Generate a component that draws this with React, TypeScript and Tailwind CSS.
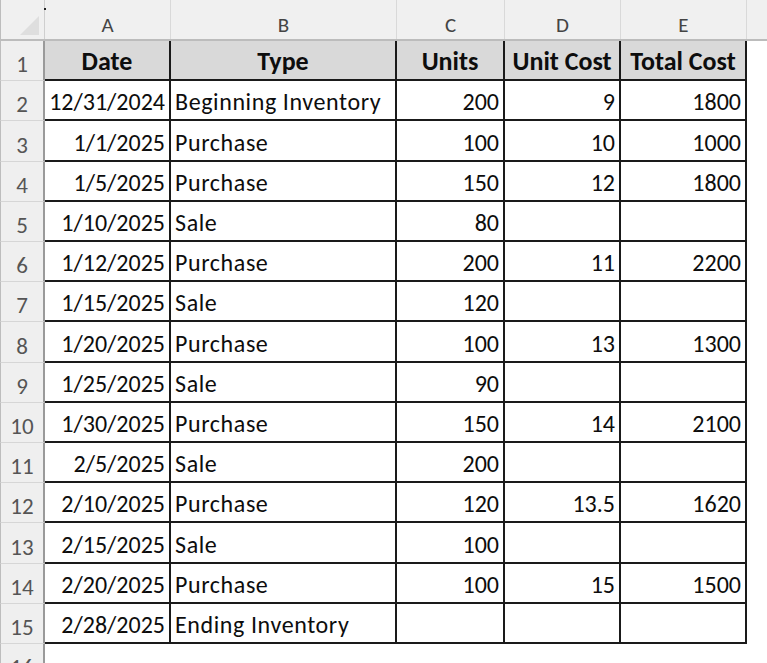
import React from "react";

type Row = { date: string; type: string; units: string; uc: string; tc: string };

const rows: Row[] = [
  { date: "12/31/2024", type: "Beginning Inventory", units: "200", uc: "9", tc: "1800" },
  { date: "1/1/2025", type: "Purchase", units: "100", uc: "10", tc: "1000" },
  { date: "1/5/2025", type: "Purchase", units: "150", uc: "12", tc: "1800" },
  { date: "1/10/2025", type: "Sale", units: "80", uc: "", tc: "" },
  { date: "1/12/2025", type: "Purchase", units: "200", uc: "11", tc: "2200" },
  { date: "1/15/2025", type: "Sale", units: "120", uc: "", tc: "" },
  { date: "1/20/2025", type: "Purchase", units: "100", uc: "13", tc: "1300" },
  { date: "1/25/2025", type: "Sale", units: "90", uc: "", tc: "" },
  { date: "1/30/2025", type: "Purchase", units: "150", uc: "14", tc: "2100" },
  { date: "2/5/2025", type: "Sale", units: "200", uc: "", tc: "" },
  { date: "2/10/2025", type: "Purchase", units: "120", uc: "13.5", tc: "1620" },
  { date: "2/15/2025", type: "Sale", units: "100", uc: "", tc: "" },
  { date: "2/20/2025", type: "Purchase", units: "100", uc: "15", tc: "1500" },
  { date: "2/28/2025", type: "Ending Inventory", units: "", uc: "", tc: "" },
];

// heights for rows 1..15
const heights = [
  "h-[40px]", "h-[40px]", "h-[41px]", "h-[40px]", "h-[40px]",
  "h-[40px]", "h-[40px]", "h-[41px]", "h-[40px]", "h-[40px]",
  "h-[40px]", "h-[40px]", "h-[41px]", "h-[40px]", "h-[40px]",
];

const cellBase =
  "border-r-2 border-b-2 border-[#1a1a1a] flex items-center px-[4px] overflow-hidden whitespace-nowrap leading-none";
const dataCell = `${cellBase} pt-[4px] text-[24px]`;
const headCell = `${cellBase} pt-[2px] text-[26px] font-bold justify-center bg-[#d9d9d9]`;

function RowNum({ n, h }: { n: number; h: string }) {
  return (
    <div
      className={`${h} w-[45px] shrink-0 bg-[#efefef] border-l border-l-[#bdbdbd] border-r-2 border-r-[#9a9a9a] border-b border-b-[#d6d6d6] flex items-center justify-center pt-[8px] text-[23px] leading-none text-[#555555]`}
    >
      {n}
    </div>
  );
}

export default function App() {
  return (
    <div className="w-[767px] h-[663px] overflow-hidden bg-white font-['Carlito','Open_Sans',sans-serif] text-[#0d0d0d]">
      {/* Column header row */}
      <div className="flex h-[41px] bg-[#f0f0f0] border-b-2 border-[#bcbcbc]">
        <div className="w-[45px] shrink-0 border-l border-l-[#bdbdbd] border-r border-r-[#cfcfcf] relative">
          <svg className="absolute left-[18px] top-[16px]" width="21" height="20" viewBox="0 0 21 20">
            <polygon points="1,19 20,19 20,0" fill="#dedede" />
          </svg>
          <div className="absolute left-[43px] top-[8px] w-[2px] h-[2px] bg-[#222]" />
        </div>
        {[
          ["A", "w-[126px]"],
          ["B", "w-[226px]"],
          ["C", "w-[108px]"],
          ["D", "w-[116px]"],
          ["E", "w-[126px]"],
        ].map(([l, w]) => (
          <div
            key={l}
            className={`${w} shrink-0 border-r border-[#d9d9d9] flex items-center justify-center pt-[11px] text-[21px] leading-none text-[#444444]`}
          >
            {l}
          </div>
        ))}
        <div className="flex-1" />
      </div>

      {/* Header row 1 */}
      <div className="flex">
        <RowNum n={1} h={heights[0]} />
        <div className={`${heights[0]} w-[126px] shrink-0 ${headCell}`}>Date</div>
        <div className={`${heights[0]} w-[226px] shrink-0 ${headCell}`}>Type</div>
        <div className={`${heights[0]} w-[108px] shrink-0 ${headCell}`}>Units</div>
        <div className={`${heights[0]} w-[116px] shrink-0 ${headCell} px-[2px]`}>Unit Cost</div>
        <div className={`${heights[0]} w-[126px] shrink-0 ${headCell} px-[2px]`}>Total Cost</div>
      </div>

      {rows.map((r, i) => {
        const h = heights[i + 1];
        return (
          <div key={i} className="flex">
            <RowNum n={i + 2} h={h} />
            <div className={`${h} w-[126px] shrink-0 ${dataCell} justify-end`}>{r.date}</div>
            <div className={`${h} w-[226px] shrink-0 ${dataCell} justify-start tracking-[0.6px]`}>{r.type}</div>
            <div className={`${h} w-[108px] shrink-0 ${dataCell} justify-end`}>{r.units}</div>
            <div className={`${h} w-[116px] shrink-0 ${dataCell} justify-end`}>{r.uc}</div>
            <div className={`${h} w-[126px] shrink-0 ${dataCell} justify-end`}>{r.tc}</div>
          </div>
        );
      })}

      <div className="flex">
        <RowNum n={16} h="h-[40px]" />
      </div>
    </div>
  );
}
